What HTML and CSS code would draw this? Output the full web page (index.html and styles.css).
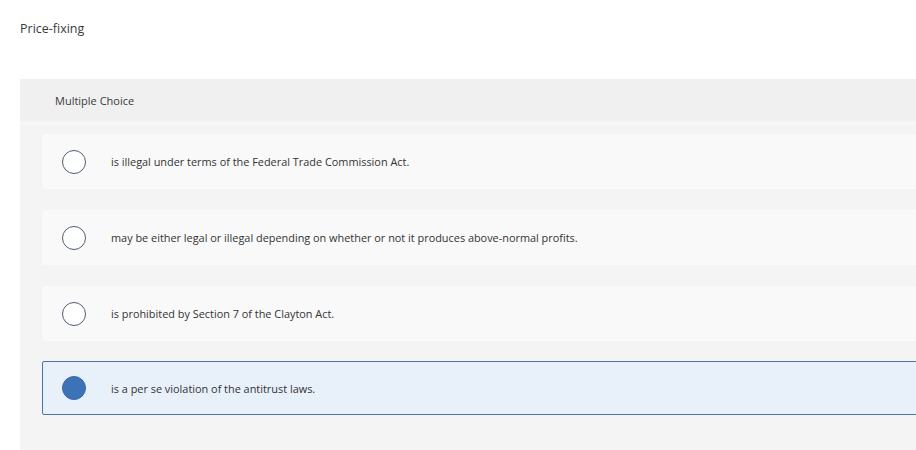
FILE: index.html
```html
<!DOCTYPE html>
<html>
<head>
<meta charset="utf-8">
<link rel="stylesheet" href="styles.css">
</head>
<body>
<div class="title">Price-fixing</div>
<div class="panel">
  <div class="panel-head">Multiple Choice</div>
  <div class="panel-body">
    <div class="option"><span class="radio"></span><span class="label">is illegal under terms of the Federal Trade Commission Act.</span></div>
    <div class="option"><span class="radio"></span><span class="label">may be either legal or illegal depending on whether or not it produces above-normal profits.</span></div>
    <div class="option"><span class="radio"></span><span class="label">is prohibited by Section 7 of the Clayton Act.</span></div>
    <div class="option selected"><span class="radio"></span><span class="label">is a per se violation of the antitrust laws.</span></div>
  </div>
</div>
</body>
</html>
```
FILE: styles.css
```css
html, body {
  margin: 0;
  padding: 0;
  background: #ffffff;
  overflow: hidden;
  font-family: "Open Sans", Lato, "Liberation Sans", sans-serif;
  font-variant-ligatures: none;
  color: #333333;
}
.title {
  font-size: 12.5px;
  line-height: 16px;
  padding: 21px 0 0 20px;
  height: 79px;
  box-sizing: border-box;
  color: #3a3a3a;
}
.panel {
  margin-left: 20px;
  width: calc(100% + 20px);
  height: 371px;
  background: #f4f4f4;
}
.panel-head {
  height: 42px;
  background: #f0f0f0;
  display: flex;
  align-items: center;
  padding-left: 35px;
  font-size: 11px;
  color: #3a3a3a;
}
.panel-body {
  border-top: 4px solid #f6f6f6;
  padding: 9px 0 0 22px;
  display: flex;
  flex-direction: column;
  gap: 21px;
}
.option {
  height: 55px;
  box-sizing: border-box;
  background: #f9f9f9;
  display: flex;
  align-items: center;
  padding-left: 20px;
  border-radius: 2px;
}
.radio {
  width: 24px;
  height: 24px;
  box-sizing: border-box;
  border: 1px solid #4f5d70;
  border-radius: 50%;
  background: #ffffff;
  flex: none;
}
.label {
  margin-left: 25px;
  font-size: 10.9px;
  color: #333333;
}
.option.selected {
  background: #e8f0fa;
  border: 1px solid #4f74a3;
  padding-left: 19px;
  height: 54px;
  margin-top: -1px;
}
.option.selected .radio {
  background: #3b73b6;
  border-color: #3a6aa6;
}
```
